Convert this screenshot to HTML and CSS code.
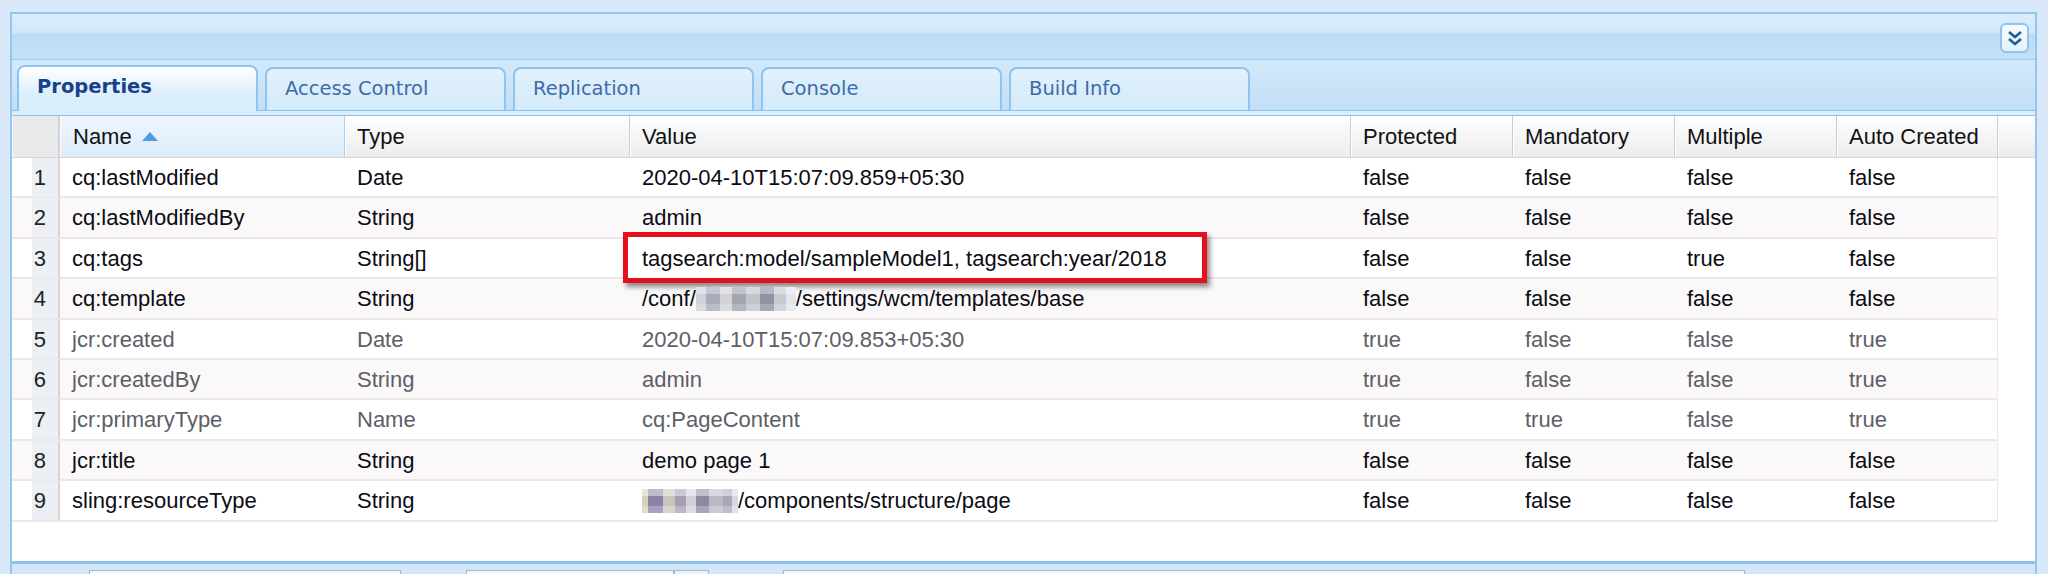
FILE: index.html
```html
<!DOCTYPE html>
<html lang="en">
<head>
    <meta charset="UTF-8">
    <meta name="viewport" content="width=device-width, initial-scale=1.0">
    <title>CRXDE Properties</title>
    <link rel="stylesheet" href="styles.css">
</head>
<body>
    <div class="panel">
        <div class="panel-header">
            <div class="collapse-btn">
                <svg width="20" height="20" viewBox="0 0 20 20">
                    <polyline points="4,4 10,9 16,4" fill="none" stroke="#1f5f98" stroke-width="2.6"/>
                    <polyline points="4,11 10,16 16,11" fill="none" stroke="#1f5f98" stroke-width="2.6"/>
                </svg>
            </div>
        </div>

        <!-- Tabs -->
        <div class="tab-strip">
            <div class="tab active">Properties</div>
            <div class="tab">Access Control</div>
            <div class="tab">Replication</div>
            <div class="tab">Console</div>
            <div class="tab">Build Info</div>
        </div>
        <div class="strip-edge"></div>

        <!-- Properties grid -->
        <div class="grid-head">
            <div class="hcell numberer"></div>
            <div class="hcell sorted">Name <span class="sort-arrow"></span></div>
            <div class="hcell">Type</div>
            <div class="hcell">Value</div>
            <div class="hcell">Protected</div>
            <div class="hcell">Mandatory</div>
            <div class="hcell">Multiple</div>
            <div class="hcell">Auto Created</div>
            <div class="hcell filler"></div>
        </div>

        <div class="grid-body">
            <div class="row">
                <div class="cell num">1</div>
                <div class="cell">cq:lastModified</div>
                <div class="cell">Date</div>
                <div class="cell">2020-04-10T15:07:09.859+05:30</div>
                <div class="cell">false</div>
                <div class="cell">false</div>
                <div class="cell">false</div>
                <div class="cell">false</div>
            </div>
            <div class="row alt">
                <div class="cell num">2</div>
                <div class="cell">cq:lastModifiedBy</div>
                <div class="cell">String</div>
                <div class="cell">admin</div>
                <div class="cell">false</div>
                <div class="cell">false</div>
                <div class="cell">false</div>
                <div class="cell">false</div>
            </div>
            <div class="row">
                <div class="cell num">3</div>
                <div class="cell">cq:tags</div>
                <div class="cell">String[]</div>
                <div class="cell highlight">
                    <span class="highlight-box"></span>
                    <span class="highlight-text">tagsearch:model/sampleModel1, tagsearch:year/2018</span>
                </div>
                <div class="cell">false</div>
                <div class="cell">false</div>
                <div class="cell">true</div>
                <div class="cell">false</div>
            </div>
            <div class="row alt">
                <div class="cell num">4</div>
                <div class="cell">cq:template</div>
                <div class="cell">String</div>
                <div class="cell">/conf/<span class="blur blur-a"></span>/settings/wcm/templates/base</div>
                <div class="cell">false</div>
                <div class="cell">false</div>
                <div class="cell">false</div>
                <div class="cell">false</div>
            </div>
            <div class="row protected">
                <div class="cell num">5</div>
                <div class="cell">jcr:created</div>
                <div class="cell">Date</div>
                <div class="cell">2020-04-10T15:07:09.853+05:30</div>
                <div class="cell">true</div>
                <div class="cell">false</div>
                <div class="cell">false</div>
                <div class="cell">true</div>
            </div>
            <div class="row alt protected">
                <div class="cell num">6</div>
                <div class="cell">jcr:createdBy</div>
                <div class="cell">String</div>
                <div class="cell">admin</div>
                <div class="cell">true</div>
                <div class="cell">false</div>
                <div class="cell">false</div>
                <div class="cell">true</div>
            </div>
            <div class="row protected">
                <div class="cell num">7</div>
                <div class="cell">jcr:primaryType</div>
                <div class="cell">Name</div>
                <div class="cell">cq:PageContent</div>
                <div class="cell">true</div>
                <div class="cell">true</div>
                <div class="cell">false</div>
                <div class="cell">true</div>
            </div>
            <div class="row alt">
                <div class="cell num">8</div>
                <div class="cell">jcr:title</div>
                <div class="cell">String</div>
                <div class="cell">demo page 1</div>
                <div class="cell">false</div>
                <div class="cell">false</div>
                <div class="cell">false</div>
                <div class="cell">false</div>
            </div>
            <div class="row">
                <div class="cell num">9</div>
                <div class="cell">sling:resourceType</div>
                <div class="cell">String</div>
                <div class="cell"><span class="blur blur-b"></span>/components/structure/page</div>
                <div class="cell">false</div>
                <div class="cell">false</div>
                <div class="cell">false</div>
                <div class="cell">false</div>
            </div>
        </div>

        <!-- Bottom toolbar (cut off by the window edge) -->
        <div class="panel-foot">
            <div class="field f-name"></div>
            <div class="field f-type"></div>
            <div class="field f-trigger"></div>
            <div class="field f-value"></div>
        </div>
    </div>
</body>
</html>
```

FILE: styles.css
```css
/* Page */
body {
    margin: 0;
    background-color: #d9e9f9;
    font-family: "Liberation Sans", Arial, sans-serif;
    overflow: hidden;
}

.panel {
    margin: 12px 11px 0 10px;
    border: 2px solid #93c6f0;
    border-bottom: none;
    background-color: #d4e8fa;
}

/* Header bar with collapse button */
.panel-header {
    height: 45px;
    display: flex;
    justify-content: flex-end;
    align-items: center;
    padding-right: 6px;
    background: linear-gradient(#dcedfb 0%, #d0e7fa 42%, #bcdcf6 44%, #c3e0f8 100%);
    border-bottom: 1px solid #9fcbf1;
}

.collapse-btn {
    width: 29px;
    height: 30px;
    box-sizing: border-box;
    margin-top: 3px;
    border: 2px solid #8fc3ee;
    border-radius: 6px;
    background: linear-gradient(#f8fcff, #e4f2fd);
    display: flex;
    justify-content: center;
    align-items: center;
}

/* Tab strip */
.tab-strip {
    height: 50px;
    display: flex;
    align-items: flex-end;
    gap: 7px;
    padding-left: 5px;
    background: linear-gradient(#d3e9fb, #c2def7);
    border-bottom: 1px solid #8cc2ef;
}

.tab {
    width: 241px;
    height: 43px;
    box-sizing: border-box;
    padding-left: 18px;
    border: 2px solid #90c4ef;
    border-bottom: none;
    border-radius: 8px 8px 0 0;
    background: linear-gradient(#e2f1fc, #d3eafb);
    font-family: "DejaVu Sans", Tahoma, sans-serif;
    font-size: 19.5px;
    line-height: 40px;
    color: #3f6ca5;
}

.tab.active {
    height: 46px;
    margin-bottom: -1px;
    background: linear-gradient(#ffffff, #ddeffc 60%, #d9edfb);
    font-weight: bold;
    color: #15428b;
}

.strip-edge {
    height: 4px;
    background-color: #d9edfb;
    border-bottom: 1px solid #8cc2ef;
}

/* Grid header */
.grid-head {
    display: grid;
    grid-template-columns: 48px 285px 285px 721px 162px 162px 162px 161px 1fr;
    height: 42px;
    box-sizing: border-box;
    background: linear-gradient(#ffffff, #f6f6f6 45%, #ececec);
    border-bottom: 1px solid #dccfcf;
}

.hcell {
    padding-left: 12px;
    font-size: 22px;
    line-height: 41px;
    color: #111;
    border-right: 1px solid #d6c9c9;
    box-shadow: inset 1px 0 0 #ffffff;
    white-space: nowrap;
}

.hcell.numberer {
    padding: 0;
    background: #e9eaec;
    border-right: 2px solid #d9cfcf;
}

.hcell.sorted {
    padding-left: 13px;
    background: linear-gradient(#eef6fe, #dcecfb);
    border-right: 1px solid #a9d0f2;
}

.hcell.filler {
    border-right: none;
}

.sort-arrow {
    display: inline-block;
    width: 0;
    height: 0;
    margin-left: 4px;
    vertical-align: 3px;
    border-left: 8px solid transparent;
    border-right: 8px solid transparent;
    border-bottom: 9px solid #4f9be0;
}

/* Grid rows */
.grid-body {
    height: 403px;
    background-color: #ffffff;
}

.row {
    display: grid;
    grid-template-columns: 48px 285px 285px 721px 162px 162px 162px 161px;
    width: 1986px;
    height: 40.4px;
    box-sizing: border-box;
    border-bottom: 2px solid #efe7e7;
    border-right: 1px solid #efe7e7;
    color: #0c0c14;
}

.row.alt {
    background-color: #faf8f8;
}

.row.protected {
    color: #5e5e66;
}

.cell {
    padding-left: 12px;
    font-size: 22px;
    line-height: 39px;
    white-space: nowrap;
}

.cell.num {
    padding: 0 12px 0 0;
    text-align: right;
    color: #222;
    background: linear-gradient(90deg, transparent 0 44%, #eceff3 44% 100%);
    border-right: 2px solid #dcd2d2;
}

.row.protected .cell.num {
    color: #222;
}

/* Red highlight around the cq:tags value */
.cell.highlight {
    position: relative;
}

.highlight-box {
    position: absolute;
    left: -7px;
    top: -7px;
    width: 584px;
    height: 51px;
    box-sizing: border-box;
    border: 5px solid #e5101b;
    background-color: #ffffff;
    box-shadow: 3px 4px 5px rgba(0, 0, 0, 0.45);
}

.highlight-text {
    position: relative;
}

/* Pixelated redactions */
.blur {
    display: inline-block;
    height: 24px;
    vertical-align: -5px;
    filter: blur(0.7px);
}

.blur-a {
    width: 100px;
    background:
        linear-gradient(rgba(255, 255, 255, 0.35) 0 30%, transparent 30% 70%, rgba(255, 255, 255, 0.2) 70%),
        linear-gradient(90deg, #cfd2da 0 10%, #a9acba 10% 24%, #d2d3d8 24% 36%, #a2a5b2 36% 50%, #c2c4cc 50% 64%, #8f94a4 64% 78%, #c8cad2 78% 90%, #e3e5ea 90%);
}

.blur-b {
    width: 96px;
    background:
        linear-gradient(rgba(255, 255, 255, 0.45) 0 28%, transparent 28% 72%, rgba(255, 255, 255, 0.25) 72%),
        linear-gradient(90deg, #d8d0b8 0 6%, #8c82a8 6% 22%, #c9c4bc 22% 34%, #a49fb2 34% 46%, #d3cfd8 46% 56%, #8e88a0 56% 70%, #bcb8c6 70% 84%, #aaa6ba 84% 94%, #d7d8e2 94%);
}

/* Bottom toolbar */
.panel-foot {
    display: flex;
    height: 13px;
    padding-top: 6px;
    box-sizing: border-box;
    overflow: hidden;
    border-top: 3px solid #8ec2ee;
    background-color: #d3e6f8;
}

.field {
    height: 26px;
    box-sizing: border-box;
    border: 1px solid #9fb9d6;
    background-color: #f4f8fc;
}

.f-name {
    width: 312px;
    margin-left: 77px;
}

.f-type {
    width: 208px;
    margin-left: 65px;
}

.f-trigger {
    width: 35px;
    background-color: #e9f1fa;
}

.f-value {
    width: 962px;
    margin-left: 74px;
}
```
